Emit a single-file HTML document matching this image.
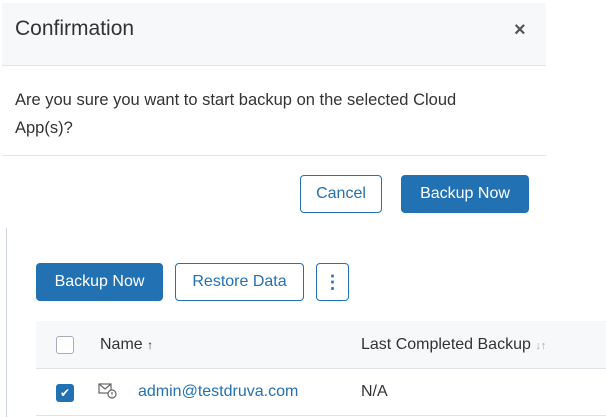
<!DOCTYPE html><html><head><style>
body{margin:0;width:606px;height:417px;background:#fff;font-family:"Liberation Sans",sans-serif;position:relative;overflow:hidden;color:#333}
.a{position:absolute}
.btn{position:absolute;box-sizing:border-box;border-radius:4px;font-size:16px;display:flex;align-items:center;justify-content:center}
.p{background:#2271b3;color:#fff}
.s{border:1px solid #2271b3;color:#2271b3;background:#fff}
</style></head><body>
<div class="a" style="left:2px;top:3px;width:544px;height:62px;background:#f7f8fa;border-bottom:1px solid #e2e4e8"></div>
<div class="a" style="left:15px;top:17px;font-size:21px;color:#333">Confirmation</div>
<div class="a" style="left:514px;top:19px;font-size:20px;color:#555;font-weight:bold">×</div>
<div class="a" style="left:15px;top:86px;font-size:16.5px;line-height:28px;color:#333;width:480px">Are you sure you want to start backup on the selected Cloud App(s)?</div>
<div class="a" style="left:2px;top:155px;width:544px;height:1px;background:#e2e4e8"></div>
<div class="btn s" style="left:300px;top:175px;width:82px;height:38px">Cancel</div>
<div class="btn p" style="left:401px;top:175px;width:128px;height:38px">Backup Now</div>
<div class="a" style="left:6px;top:228px;width:1px;height:189px;background:#cdd3da"></div>
<div class="btn p" style="left:36px;top:263px;width:127px;height:38px">Backup Now</div>
<div class="btn s" style="left:175px;top:263px;width:129px;height:38px;color:#2271b3">Restore Data</div>
<div class="btn s" style="left:316px;top:263px;width:33px;height:38px;font-weight:bold;font-size:18px">⋮</div>
<div class="a" style="left:36px;top:321px;width:570px;height:47px;background:#f7f8fa;border-bottom:1px solid #dfe3e8"></div>
<div class="a" style="left:56px;top:336px;width:16px;height:16px;border:1px solid #aab;border-radius:3px;background:#fff"></div>
<div class="a" style="left:100px;top:336px;font-size:16px;color:#333">Name <span style="font-size:12px">↑</span></div>
<div class="a" style="left:361px;top:336px;font-size:16px;color:#333">Last Completed Backup <span style="font-size:11px;color:#aaa">↓↑</span></div>
<div class="a" style="left:56px;top:384px;width:18px;height:18px;border-radius:3px;background:#2271b3;color:#fff;font-size:12px;text-align:center;line-height:18px">✔</div>
<svg class="a" style="left:98px;top:383px" width="20" height="16" viewBox="0 0 20 16"><rect x="1" y="1" width="12" height="9" fill="none" stroke="#666" stroke-width="1.2"/><path d="M1 1l6 5 6-5" fill="none" stroke="#666" stroke-width="1.2"/><circle cx="14" cy="11" r="4" fill="#fff" stroke="#666" stroke-width="1.2"/><path d="M14 9v2.5M14 12.8v.6" stroke="#666" stroke-width="1.2"/></svg>
<div class="a" style="left:138px;top:383px;font-size:16px;color:#2271b3">admin@testdruva.com</div>
<div class="a" style="left:361px;top:383px;font-size:16px;color:#333">N/A</div>
<div class="a" style="left:36px;top:415px;width:570px;height:1px;background:#dfe3e8"></div>
</body></html>
